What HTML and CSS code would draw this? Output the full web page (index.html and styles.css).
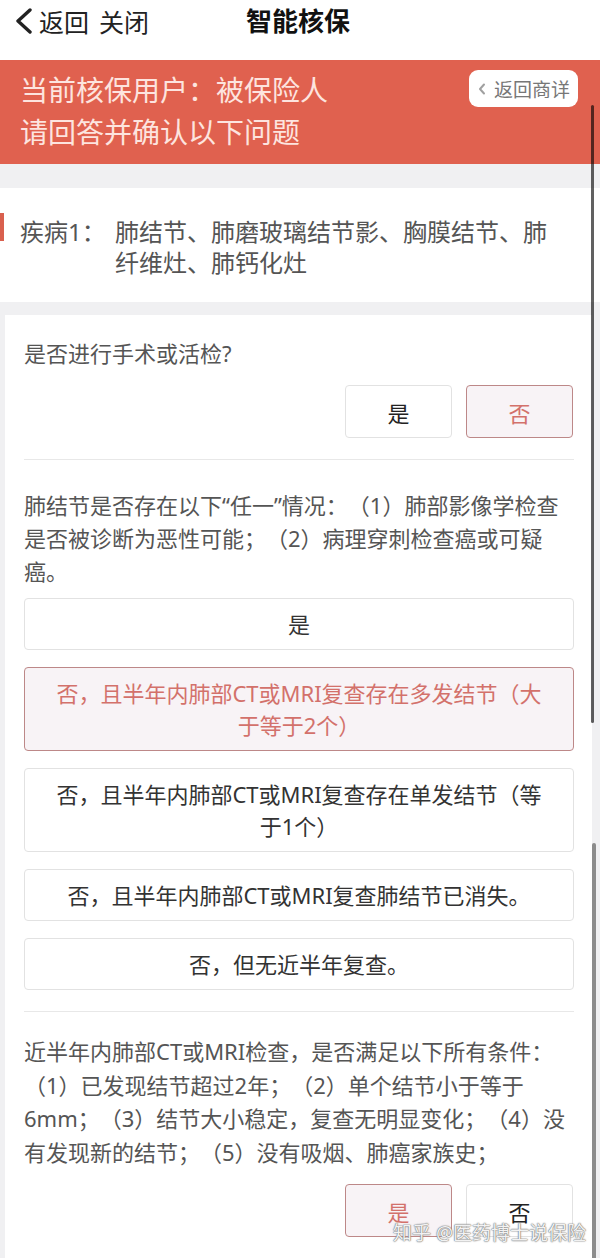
FILE: index.html
```html
<!DOCTYPE html>
<html lang="zh-CN">
  <head>
    <meta charset="UTF-8" />
    <meta name="viewport" content="width=device-width, initial-scale=1.0" />
    <title>智能核保</title>
    <link rel="stylesheet" href="styles.css">
  </head>
  <body>
    <header class="nav">
      <div class="nav-left">
        <svg class="nav-back" width="20" height="26" viewBox="0 0 20 26">
          <polyline points="16,2 4,13 16,24" fill="none" stroke="#222" stroke-width="3.4" stroke-linecap="round" stroke-linejoin="round" />
        </svg>
        <span>返回</span>
        <span class="nav-close">关闭</span>
      </div>
      <h1>智能核保</h1>
      <div></div>
    </header>

    <section class="banner">
      <div class="banner-text">
        <p>当前核保用户：被保险人</p>
        <p>请回答并确认以下问题</p>
      </div>
      <button class="back-detail">
        <svg width="8" height="12" viewBox="0 0 8 12">
          <polyline points="6,1.5 2,6 6,10.5" fill="none" stroke="#a0a0a0" stroke-width="2" stroke-linecap="round" stroke-linejoin="round" />
        </svg>
        返回商详
      </button>
    </section>

    <section class="disease">
      <span class="disease-label">疾病1：</span>
      <span class="disease-names">肺结节、肺磨玻璃结节影、胸膜结节、肺纤维灶、肺钙化灶</span>
    </section>

    <main class="card">
      <div class="question">
        <p class="question-text">是否进行手术或活检?</p>
        <div class="answer-pair">
          <button class="answer">是</button>
          <button class="answer selected">否</button>
        </div>
      </div>

      <div class="question q-options">
        <p class="question-text">肺结节是否存在以下“任一”情况：（1）肺部影像学检查是否被诊断为恶性可能；（2）病理穿刺检查癌或可疑癌。</p>
        <div class="option-list">
          <button class="option">是</button>
          <button class="option selected">否，且半年内肺部CT或MRI复查存在多发结节（大于等于2个）</button>
          <button class="option">否，且半年内肺部CT或MRI复查存在单发结节（等于1个）</button>
          <button class="option">否，且半年内肺部CT或MRI复查肺结节已消失。</button>
          <button class="option">否，但无近半年复查。</button>
        </div>
      </div>

      <div class="question q-last">
        <p class="question-text">近半年内肺部CT或MRI检查，是否满足以下所有条件：（1）已发现结节超过2年；（2）单个结节小于等于6mm；（3）结节大小稳定，复查无明显变化；（4）没有发现新的结节；（5）没有吸烟、肺癌家族史；</p>
        <div class="answer-pair">
          <button class="answer selected">是</button>
          <button class="answer">否</button>
        </div>
      </div>
    </main>

    <!-- scroll indicators and the watermark sit over the page -->
    <div class="scroll-thumb thumb-outer"></div>
    <div class="scroll-thumb thumb-inner"></div>
    <div class="watermark">知乎 @医药博士说保险</div>
  </body>
</html>
```

FILE: styles.css
```css
body {
  margin: 0;
  background: #f0f0f2;
  font-family: "Noto Sans", "Noto Sans CJK SC", sans-serif;
  color: #333;
  position: relative;
  min-height: 1258px;
  overflow: hidden;
  /* keep full-width punctuation at full width */
  text-spacing-trim: space-all;
}

p {
  margin: 0;
}

button {
  font-family: inherit;
  text-spacing-trim: space-all;
}

/* top bar */
.nav {
  height: 60px;
  background: #fff;
  display: grid;
  grid-template-columns: 1fr auto 1fr;
  align-items: start;
}

.nav-left {
  display: flex;
  align-items: center;
  height: 42px;
  padding-left: 14px;
  font-size: 25px;
  color: #222;
}

.nav-back {
  margin-right: 5px;
}

.nav-close {
  margin-left: 10px;
}

.nav h1 {
  margin: 0;
  font-size: 26px;
  font-weight: 700;
  line-height: 42px;
  color: #111;
  transform: translateX(-2px);
}

/* red banner */
.banner {
  background: #e0614f;
  padding: 9px 22px 11px 20px;
  display: flex;
  justify-content: space-between;
  align-items: flex-start;
  color: #fde4df;
  font-size: 28px;
  line-height: 42px;
}

.back-detail {
  margin-top: 1px;
  height: 37px;
  padding: 0 8px 0 9px;
  background: #fff;
  border: none;
  border-radius: 9px;
  font-size: 19px;
  color: #777;
  display: flex;
  align-items: center;
  gap: 8px;
}

/* disease row */
.disease {
  margin-top: 24px;
  background: #fff;
  display: flex;
  align-items: flex-start;
  padding: 28px 40px 24px 0;
  font-size: 24px;
  line-height: 31px;
  color: #555;
}

.disease::before {
  content: "";
  flex: none;
  width: 4px;
  height: 28px;
  margin-top: -3px;
  background: #d9604e;
}

.disease-label {
  flex: none;
  width: 95px;
  margin-left: 16px;
}

/* question card */
.card {
  margin: 13px 8px 0 5px;
  padding: 0 18px 40px 19px;
  background: #fff;
}

.question {
  padding: 22px 0 21px;
  border-bottom: 1px solid #e8e8e8;
}

.q-options {
  padding-top: 29px;
}

.q-last {
  padding-top: 23px;
  border-bottom: none;
}

.question-text {
  font-size: 22px;
  line-height: 33px;
  color: #555;
}

.q-last .question-text {
  line-height: 33.5px;
}

.answer-pair {
  display: flex;
  justify-content: flex-end;
  gap: 14px;
  margin-top: 15px;
  padding-right: 1px;
}

.answer {
  width: 107px;
  height: 53px;
  background: #fff;
  border: 1px solid #e2e2e2;
  border-radius: 4px;
  font-size: 22px;
  color: #222;
}

.option-list {
  display: flex;
  flex-direction: column;
  gap: 17px;
  margin-top: 10px;
}

.option {
  width: 100%;
  padding: 9px 26px;
  background: #fff;
  border: 1px solid #e2e2e2;
  border-radius: 4px;
  font-size: 22px;
  line-height: 32px;
  color: #333;
  text-align: center;
}

.answer.selected,
.option.selected {
  background: #f8f3f6;
  border-color: #bd8888;
  color: #d3716b;
}

/* overlays */
.scroll-thumb {
  position: absolute;
  border-radius: 2px;
}

.thumb-outer {
  left: 591px;
  top: 105px;
  width: 3px;
  height: 618px;
  background: rgba(0, 0, 0, 0.62);
}

.thumb-inner {
  left: 592px;
  top: 843px;
  width: 4px;
  height: 420px;
  background: #8c8c8c;
}

.watermark {
  position: absolute;
  top: 1220px;
  right: 14px;
  font-size: 19px;
  line-height: 26px;
  color: rgba(255, 255, 255, 0.92);
  text-shadow: 0 0 1px #777, 0 0 1px #777, 0 0 2px #999;
}
```
